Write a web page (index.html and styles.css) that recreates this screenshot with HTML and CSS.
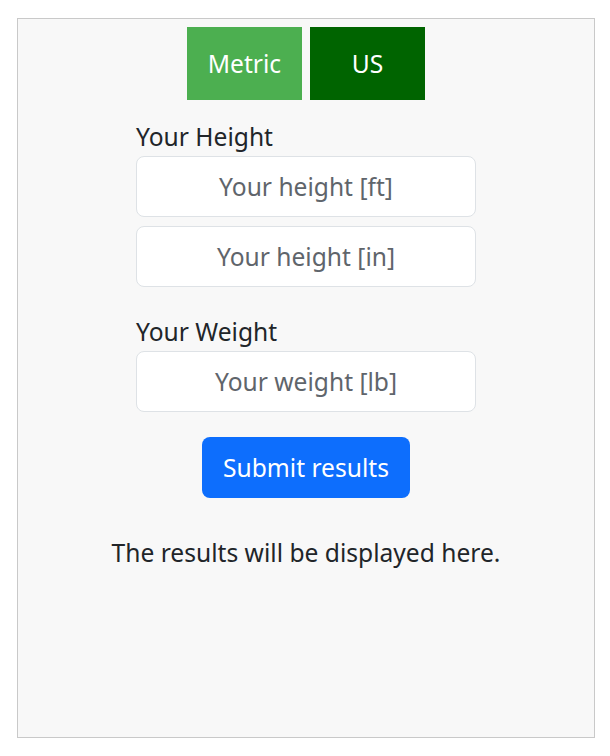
FILE: index.html
```html
<!DOCTYPE html>
<html lang="en">
<head>
<meta charset="utf-8">
<title>BMI Calculator</title>
<link rel="stylesheet" href="styles.css">
</head>
<body>
<main class="app">
  <div class="units">
    <button class="unit unit-metric" type="button">Metric</button>
    <button class="unit unit-us" type="button">US</button>
  </div>
  <form class="form">
    <div class="group">
      <label class="label">Your Height</label>
      <input class="field" type="text" placeholder="Your height [ft]">
      <input class="field field-next" type="text" placeholder="Your height [in]">
    </div>
    <div class="group group-weight">
      <label class="label">Your Weight</label>
      <input class="field" type="text" placeholder="Your weight [lb]">
    </div>
    <button class="submit" type="button">Submit results</button>
  </form>
  <p class="result">The results will be displayed here.</p>
</main>
</body>
</html>
```
FILE: styles.css
```css
html, body {
  margin: 0;
  padding: 0;
  background: #ffffff;
}
body {
  font-family: "Noto Sans", "Open Sans", sans-serif;
  color: #212529;
  padding: 18px 15px 0 17px;
}
.app {
  box-sizing: border-box;
  width: 578px;
  height: 720px;
  border: 1px solid #c9c9c9;
  background: #f8f8f8;
  display: flex;
  flex-direction: column;
  align-items: center;
  padding-top: 8px;
}
.units {
  display: flex;
  gap: 8px;
}
.unit {
  width: 115px;
  height: 73px;
  border: none;
  color: #ffffff;
  font-family: inherit;
  font-size: 24.6px;
  padding: 0;
}
.unit-metric { background: #4caf50; }
.unit-us { background: #006400; }
.form {
  display: flex;
  flex-direction: column;
  align-items: center;
  margin-top: 19px;
}
.group {
  width: 340px;
  display: flex;
  flex-direction: column;
}
.group-weight {
  margin-top: 27px;
}
.label {
  font-size: 24.6px;
  line-height: 36px;
  height: 37px;
}
.field {
  box-sizing: border-box;
  width: 340px;
  height: 61px;
  border: 1px solid #dee2e6;
  border-radius: 8px;
  background: #ffffff;
  font-family: inherit;
  font-size: 24.6px;
  text-align: center;
  color: #212529;
  padding: 0 16px;
  outline: none;
}
.field::placeholder {
  color: #5f656b;
  opacity: 1;
}
.field-next {
  margin-top: 9px;
}
.submit {
  margin-top: 25px;
  width: 208px;
  height: 61px;
  border: none;
  border-radius: 8px;
  background: #0d6efd;
  color: #ffffff;
  font-family: inherit;
  font-size: 24.6px;
  padding: 0;
}
.result {
  margin: 37px 0 0;
  font-size: 24.6px;
  line-height: 36px;
}
```
